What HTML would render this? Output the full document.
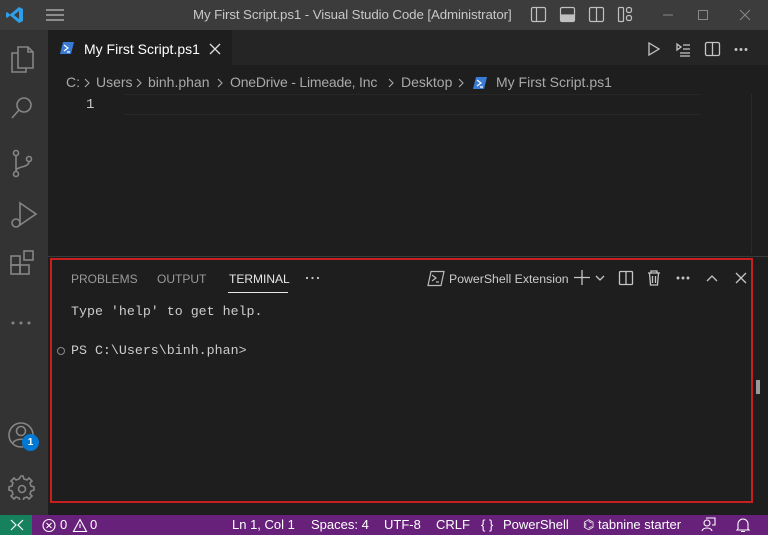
<!DOCTYPE html>
<html><head><meta charset="utf-8"><style>
*{margin:0;padding:0;box-sizing:border-box}
body{width:768px;height:535px;overflow:hidden;background:#1e1e1e;font-family:"Liberation Sans",sans-serif;color:#ccc;position:relative}
.a{position:absolute;white-space:nowrap}
.ui{font-family:"Liberation Sans",sans-serif}
.mono{font-family:"Liberation Mono",monospace}
svg{position:absolute}
.bc{position:absolute;top:74px;font-size:14px;color:#a9a9a9}
.sb{position:absolute;top:517px;font-size:13px;color:#fff}
</style></head><body>
<!-- title bar -->
<div class="a" style="left:0;top:0;width:768px;height:30px;background:#3c3c3c"></div>
<svg style="left:5px;top:5px" width="20" height="20" viewBox="0 0 20 20"><path d="M14 2 L18 4 V16 L14 18 L5 10.5 L2 13 L1 12 V8 L2 7 L5 9.5 Z M14 6 L9 10 L14 14 Z" fill="#2d9ee8"/></svg>
<svg style="left:45px;top:8px" width="20" height="14"><path d="M1 2H19M1 7H19M1 12H19" stroke="#bbb" stroke-width="1.3"/></svg>
<div class="a" style="left:193px;top:7px;font-size:13.3px;color:#c8c8c8;letter-spacing:-0.1px">My First Script.ps1 - Visual Studio Code [Administrator]</div>
<svg style="left:530px;top:6px" width="120" height="18" fill="none" stroke="#c0c0c0" stroke-width="1.2"><rect x="1.5" y="1.5" width="14" height="14" rx="1.5"/><path d="M6.5 2V15"/><rect x="30.5" y="1.5" width="14" height="14" rx="1.5"/><rect x="31" y="9" width="13" height="6" fill="#c0c0c0"/><rect x="59.5" y="1.5" width="14" height="14" rx="1.5"/><path d="M66.5 2V15"/><rect x="88.5" y="1.5" width="5" height="14" rx="1"/><rect x="96.5" y="1.5" width="5" height="5" rx="2"/><rect x="96.5" y="9.5" width="5" height="5" rx="2"/></svg>
<svg style="left:660px;top:8px" width="100" height="14" fill="none" stroke="#888" stroke-width="1"><path d="M3 7H13"/><rect x="38.5" y="2.5" width="9" height="9"/><path d="M80 2L90 12M90 2L80 12"/></svg>
<!-- activity bar -->
<div class="a" style="left:0;top:30px;width:48px;height:485px;background:#333"></div>
<svg style="left:8px;top:42px" width="32" height="260" fill="none" stroke="#858585" stroke-width="1.6">
<path d="M10 5H20L25 10V26H10Z M20 5V10H25 M10 11H4V30H18V26"/>
<circle cx="16" cy="63" r="7"/><path d="M11 68L4 76"/>
<circle cx="8" cy="111" r="2.5"/><circle cx="8" cy="132" r="2.5"/><circle cx="21" cy="117" r="2.5"/><path d="M8 113.5V129.5 M21 119.5C21 126 8 124 8 129"/>
<path d="M12 161L28 172L12 183Z"/><circle cx="8" cy="181" r="4"/>
<rect x="3" y="223" width="9" height="9"/><rect x="12" y="223" width="9" height="9"/><rect x="3" y="214" width="9" height="9"/><rect x="16" y="209" width="9" height="9"/>
</svg>
<svg style="left:10px;top:320px" width="24" height="6" fill="#858585"><circle cx="3" cy="3" r="1.5"/><circle cx="11" cy="3" r="1.5"/><circle cx="19" cy="3" r="1.5"/></svg>
<svg style="left:7px;top:420px" width="34" height="80" fill="none" stroke="#858585" stroke-width="1.6"><circle cx="14" cy="15" r="12"/><circle cx="14" cy="11" r="4.5"/><path d="M6 23C8 18 20 18 22 23"/>
<path d="M14 56l2 0 1 3 3 1 2-2 3 3-2 2 1 3 3 1v3l-3 1-1 3 2 2-3 3-2-2-3 1-1 3h-3l-1-3-3-1-2 2-3-3 2-2-1-3-3-1v-3l3-1 1-3-2-2 3-3 2 2 3-1z"/><circle cx="15" cy="69" r="3.5"/></svg>
<div class="a" style="left:22px;top:434px;width:17px;height:17px;border-radius:50%;background:#0078d4;color:#fff;font-size:10px;font-weight:bold;text-align:center;line-height:17px">1</div>
<!-- tabs -->
<div class="a" style="left:48px;top:30px;width:720px;height:35px;background:#252526"></div>
<div class="a" style="left:48px;top:30px;width:184px;height:35px;background:#1e1e1e"></div>
<svg style="left:60px;top:42px" width="14" height="12"><path d="M3 0H14L11 12H0Z" fill="#3a7bd5"/><path d="M4 3L8 6L4 9M7 10H10" stroke="#fff" stroke-width="1.2" fill="none"/></svg>
<div class="a ui" style="left:84px;top:41px;font-size:14px;color:#fff">My First Script.ps1</div>
<svg style="left:209px;top:43px" width="12" height="12"><path d="M1 1L11 11M11 1L1 11" stroke="#ddd" stroke-width="1.3"/></svg>
<svg style="left:645px;top:40px" width="110" height="18" fill="none" stroke="#c5c5c5" stroke-width="1.3"><path d="M4 3L14 9L4 15Z"/><path d="M32 4L36 7L32 10Z M38 5H45M38 9H45M35 13H45M35 16H45"/><rect x="60.5" y="2.5" width="14" height="13" rx="1.5"/><path d="M67.5 3V15"/><circle cx="91" cy="9.5" r=".8" fill="#c5c5c5"/><circle cx="96" cy="9.5" r=".8" fill="#c5c5c5"/><circle cx="101" cy="9.5" r=".8" fill="#c5c5c5"/></svg>
<!-- breadcrumbs -->
<div class="bc" style="left:66px">C:</div>
<div class="bc" style="left:96px">Users</div>
<div class="bc" style="left:148px">binh.phan</div>
<div class="bc" style="left:230px;letter-spacing:-0.2px">OneDrive - Limeade, Inc</div>
<div class="bc" style="left:401px">Desktop</div>
<div class="bc" style="left:496px">My First Script.ps1</div>
<svg style="left:83px;top:77px" width="390" height="12" fill="none" stroke="#a9a9a9" stroke-width="1.1"><path d="M2 2L6 6L2 10M54 2L58 6L54 10M135 2L139 6L135 10M306 2L310 6L306 10M376 2L380 6L376 10"/></svg>
<svg style="left:473px;top:77px" width="14" height="12"><path d="M3 0H14L11 12H0Z" fill="#3a7bd5"/><path d="M4 3L8 6L4 9M7 10H10" stroke="#fff" stroke-width="1.2" fill="none"/></svg>
<div class="a" style="left:124px;top:94px;width:577px;height:21px;border-top:1px solid #282828;border-bottom:1px solid #282828"></div>
<div class="a mono" style="left:86px;top:97px;font-size:14px;color:#c6c6c6">1</div>
<div class="a" style="left:751px;top:94px;width:17px;height:160px;border-left:1px solid #2a2a2a"></div>
<!-- panel -->
<div class="a" style="left:48px;top:256px;width:720px;height:1px;background:#3a3a3a"></div>
<div class="a" style="left:50px;top:258px;width:703px;height:245px;border:2px solid #c81e1e"></div>
<div class="a ui" style="left:71px;top:272px;font-size:12px;color:#9a9a9a">PROBLEMS</div>
<div class="a ui" style="left:157px;top:272px;font-size:12px;color:#9a9a9a">OUTPUT</div>
<div class="a ui" style="left:229px;top:272px;font-size:12px;color:#e7e7e7">TERMINAL</div>
<div class="a" style="left:228px;top:292px;width:60px;height:1px;background:#e7e7e7"></div>
<svg style="left:305px;top:276px" width="16" height="4" fill="#ccc"><circle cx="2" cy="2" r="1.1"/><circle cx="7.5" cy="2" r="1.1"/><circle cx="13" cy="2" r="1.1"/></svg>
<svg style="left:427px;top:270px" width="18" height="17" fill="none" stroke="#bbb" stroke-width="1.2"><path d="M4 1.5H17L14 15.5H1Z"/><path d="M5 5L9 8L5 11M9 12H12"/></svg>
<div class="a ui" style="left:449px;top:272px;font-size:12.3px;color:#ccc">PowerShell Extension</div>
<svg style="left:572px;top:268px" width="180" height="20" fill="none" stroke="#c5c5c5" stroke-width="1.3"><path d="M10 2V17M2 9.5H18"/><path d="M24 8L28 12L32 8"/><rect x="47.5" y="3.5" width="13" height="13" rx="1"/><path d="M54 4V16"/><path d="M76 5H88M79 5V3H85V5M77.5 5L78.5 17H85.5L86.5 5M80.5 8V15M83.5 8V15"/><circle cx="106" cy="10" r=".8" fill="#c5c5c5"/><circle cx="111" cy="10" r=".8" fill="#c5c5c5"/><circle cx="116" cy="10" r=".8" fill="#c5c5c5"/><path d="M135 13L140 8L145 13"/><path d="M164 5L174 15M174 5L164 15"/></svg>
<div class="a mono" style="left:71px;top:304px;font-size:13.3px;color:#ccc">Type 'help' to get help.</div>
<div class="a" style="left:57px;top:347px;width:8px;height:8px;border:1px solid #888;border-radius:50%"></div>
<div class="a mono" style="left:71px;top:343px;font-size:13.3px;color:#ccc">PS C:\Users\binh.phan&gt;</div>
<div class="a" style="left:756px;top:380px;width:4px;height:14px;background:#9a9a9a"></div>
<!-- status bar -->
<div class="a" style="left:0;top:515px;width:768px;height:20px;background:#68217a"></div>
<div class="a" style="left:0;top:515px;width:32px;height:20px;background:#16825d"></div>
<svg style="left:9px;top:518px" width="16" height="14" fill="none" stroke="#fff" stroke-width="1.2"><path d="M2 12L7 7L2 2M14 2L9 7L14 12"/></svg>
<svg style="left:42px;top:518px" width="70" height="15" fill="none" stroke="#fff" stroke-width="1.1"><circle cx="7" cy="7.5" r="6"/><path d="M4.5 5L9.5 10M9.5 5L4.5 10"/><path d="M38 1.5L44.5 13.5H31.5Z M38 6V10"/></svg>
<div class="sb" style="left:60px">0</div>
<div class="sb" style="left:90px">0</div>
<div class="sb" style="left:232px">Ln 1, Col 1</div>
<div class="sb" style="left:311px">Spaces: 4</div>
<div class="sb" style="left:384px">UTF-8</div>
<div class="sb" style="left:436px">CRLF</div>
<div class="sb" style="left:481px">{ }</div>
<div class="sb" style="left:503px">PowerShell</div>
<div class="sb" style="left:583px">⌬</div>
<div class="sb" style="left:598px">tabnine starter</div>
<svg style="left:700px;top:517px" width="60" height="16" fill="none" stroke="#fff" stroke-width="1.1"><circle cx="7" cy="6" r="3"/><path d="M2 14C3 10 11 10 12 14M6 1H15V8H12"/><path d="M38 12V7A5 5 0 0 1 48 7V12L49 13H37L38 12M41 14.5H45"/></svg>
</body></html>
